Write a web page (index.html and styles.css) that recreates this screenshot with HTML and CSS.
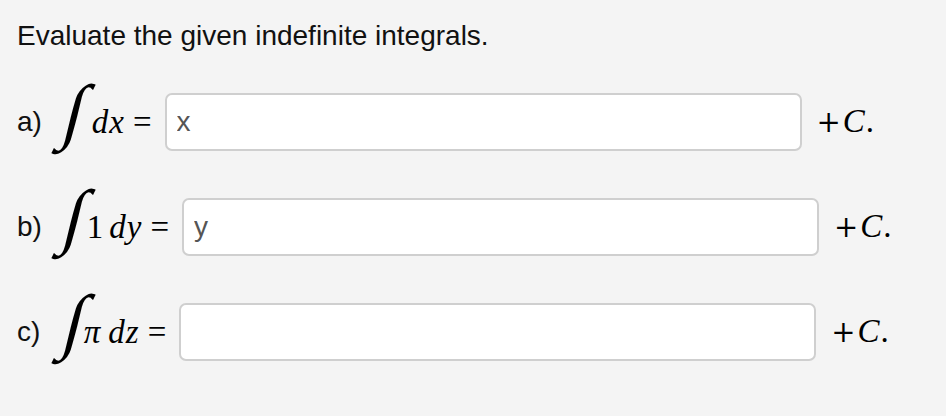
FILE: index.html
```html
<!DOCTYPE html>
<html lang="en">

<head>
    <meta charset="UTF-8">
    <title>Indefinite integrals</title>
    <link rel="stylesheet" href="styles.css">
</head>

<body>
    <div class="problem">
        <p class="prompt">Evaluate the given indefinite integrals.</p>

        <div class="row">
            <span class="label">a)</span>
            <span class="int">&int;</span>
            <span class="expr expr_a"><i class="var">dx</i><span class="eq">=</span></span>
            <input class="answer" type="text" value="x">
            <span class="expr const"><span class="op">+</span><i class="var">C</i>.</span>
        </div>

        <div class="row">
            <span class="label">b)</span>
            <span class="int">&int;</span>
            <span class="expr"><span class="num">1</span><i class="var">dy</i><span class="eq">=</span></span>
            <input class="answer" type="text" value="y">
            <span class="expr const"><span class="op">+</span><i class="var">C</i>.</span>
        </div>

        <div class="row">
            <span class="label">c)</span>
            <span class="int">&int;</span>
            <span class="expr"><i class="var pi">&pi;</i><i class="var">dz</i><span class="eq">=</span></span>
            <input class="answer" type="text" value="">
            <span class="expr const"><span class="op">+</span><i class="var">C</i>.</span>
        </div>
    </div>
</body>

</html>
```

FILE: styles.css
```css
* {
    margin: 0;
    padding: 0;
    box-sizing: border-box;
}

body {
    background: #f4f4f4;
    font-family: "Liberation Sans", Arial, sans-serif;
    font-size: 28px;
    color: #111;
}

.problem {
    padding: 20px 17px;
}

.prompt {
    line-height: 32px;
    margin-bottom: 17px;
}

.row {
    display: flex;
    align-items: center;
    height: 105px;
}

.label {
    width: 28px;
}

.int {
    font-family: "Liberation Serif", "Times New Roman", serif;
    font-size: 72px;
    line-height: 1;
    color: #000;
    transform: skewX(-14deg) translateY(-11px);
    margin: 0 2px 0 18px;
}

.expr {
    font-family: "Liberation Serif", "Times New Roman", serif;
    font-size: 33px;
    line-height: 40px;
    color: #000;
}

.expr_a {
    margin-left: 7px;
}

.var {
    letter-spacing: 1px;
}

.num {
    margin: 0 6px 0 2px;
}

.pi {
    margin: 0 7px 0 -1px;
}

.op {
    font-family: "DejaVu Serif", serif;
    font-size: 29px;
}

.eq {
    margin: 0 13px 0 8px;
}

.answer {
    width: 637px;
    height: 58px;
    border: 2px solid #cfcfcf;
    border-radius: 7px;
    background: #fff;
    font-family: "Liberation Sans", Arial, sans-serif;
    font-size: 28px;
    color: #555;
    padding: 0 10px;
    outline: none;
}

.const {
    margin-left: 15px;
}

.const .op {
    margin-right: 2px;
}
```
